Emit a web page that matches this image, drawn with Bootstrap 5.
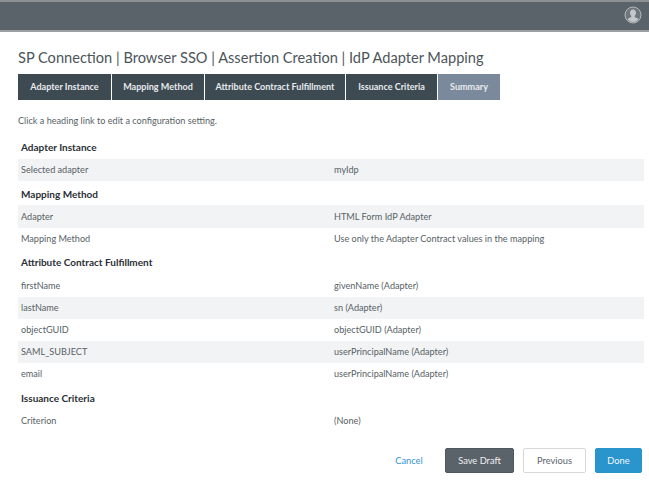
<!DOCTYPE html>
<html lang="en"><head><meta charset="utf-8"><title>IdP Adapter Mapping</title>
<link href="https://cdn.jsdelivr.net/npm/bootstrap@5.3.0/dist/css/bootstrap.min.css" rel="stylesheet">
<style>
html,body{height:497px;overflow:hidden}
body{font-family:Lato,"Open Sans",sans-serif;font-size:9.15px;color:#575f66;background:#fff}
.topbar{height:32px;background:#5a6369;border-top:2px solid #8b9195;border-bottom:2px solid #9aa0a3;padding-right:7px;padding-bottom:3px}
.content-wrap{padding:0 5px 0 18px}
.page-title{font-size:14.6px;font-weight:400;line-height:20px;margin:16px 0 6px;color:#4c555b}
.wiz{height:26px}
.wiz-tab{background:#3d4a52;color:#e8ebed;font-weight:700;font-size:9.05px;margin-right:1px;display:flex;align-items:center;justify-content:center}
.wiz-tab.t1{width:93px}.wiz-tab.t2{width:92px}.wiz-tab.t3{width:140px}.wiz-tab.t4{width:91px}
.wiz-tab.current{background:#7a8a9c;margin-right:0;width:62px}
.hint{margin:11px 0 0;line-height:20px;height:20px}
.sect{font-weight:700;font-size:10px;color:#2a3036;line-height:16px;padding:0 3px;margin:0}
.s1{margin:8px 0 4px}.s2{margin:5px 0 3px}.s3{margin:4px 0 5px}.s4{margin:5px 0 4px}
.data-row{height:22px;padding-left:3px}
.data-row.tall{height:23px}
.data-row.shade{background:#f2f3f4}
.key{width:313px;flex:none}
.actions{margin-top:16px;padding-right:2px}
.foot-btn{height:25px;font-size:9.3px;border-radius:2px;padding:0;display:flex;align-items:center;justify-content:center}
.b-cancel{color:#3394cf;width:30px;margin-right:21px}
.b-save{background:#5a6369;border:1px solid #50585e;color:#eef0f1;width:69px;margin-right:9px}
.b-prev{background:#fff;border:1px solid #d5d8da;color:#5d656b;width:63px;margin-right:9px}
.b-done{background:#2a94cc;border:1px solid #2a94cc;color:#f2f8fc;width:47px}
</style></head><body>
<div class="topbar d-flex justify-content-end align-items-center">
<svg width="18" height="18" viewBox="0 0 18 18" aria-label="User"><circle cx="9" cy="9" r="8" fill="#6f777c" stroke="#b4b9bc" stroke-width="1"/><path d="M9 3.6c-1.900 0-3 1.400-3 3.200 0 1.300.5 2.500 1.300 3.200v1.100c-1.400.6-3 1.200-3.700 2.300A7.500 7.500 0 0 0 9 16a7.500 7.500 0 0 0 5.400-2.600c-.7-1.100-2.300-1.700-3.700-2.300V10c.8-.7 1.300-1.900 1.300-3.200 0-1.800-1.100-3.200-3-3.200z" fill="#c4c8ca"/></svg>
</div>
<div class="content-wrap">
<h1 class="page-title">SP Connection | Browser SSO | Assertion Creation | IdP Adapter Mapping</h1>
<div class="wiz d-flex">
<div class="wiz-tab t1">Adapter Instance</div><div class="wiz-tab t2">Mapping Method</div><div class="wiz-tab t3">Attribute Contract Fulfillment</div><div class="wiz-tab t4">Issuance Criteria</div><div class="wiz-tab current">Summary</div>
</div>
<p class="hint">Click a heading link to edit a configuration setting.</p>
<div class="mt-1">
<h2 class="sect s1">Adapter Instance</h2>
<div class="data-row shade d-flex align-items-center"><div class="key">Selected adapter</div><div>myIdp</div></div>
<h2 class="sect s2">Mapping Method</h2>
<div class="data-row tall shade d-flex align-items-center"><div class="key">Adapter</div><div>HTML Form IdP Adapter</div></div>
<div class="data-row d-flex align-items-center"><div class="key">Mapping Method</div><div>Use only the Adapter Contract values in the mapping</div></div>
<h2 class="sect s3">Attribute Contract Fulfillment</h2>
<div class="data-row d-flex align-items-center"><div class="key">firstName</div><div>givenName (Adapter)</div></div>
<div class="data-row shade d-flex align-items-center"><div class="key">lastName</div><div>sn (Adapter)</div></div>
<div class="data-row d-flex align-items-center"><div class="key">objectGUID</div><div>objectGUID (Adapter)</div></div>
<div class="data-row shade d-flex align-items-center"><div class="key">SAML_SUBJECT</div><div>userPrincipalName (Adapter)</div></div>
<div class="data-row d-flex align-items-center"><div class="key">email</div><div>userPrincipalName (Adapter)</div></div>
<h2 class="sect s4">Issuance Criteria</h2>
<div class="data-row d-flex align-items-center"><div class="key">Criterion</div><div>(None)</div></div>
</div>
<div class="actions d-flex justify-content-end align-items-center">
<a class="foot-btn b-cancel text-decoration-none" href="#">Cancel</a>
<button class="foot-btn b-save">Save Draft</button>
<button class="foot-btn b-prev">Previous</button>
<button class="foot-btn b-done">Done</button>
</div>
</div>
</body></html>
